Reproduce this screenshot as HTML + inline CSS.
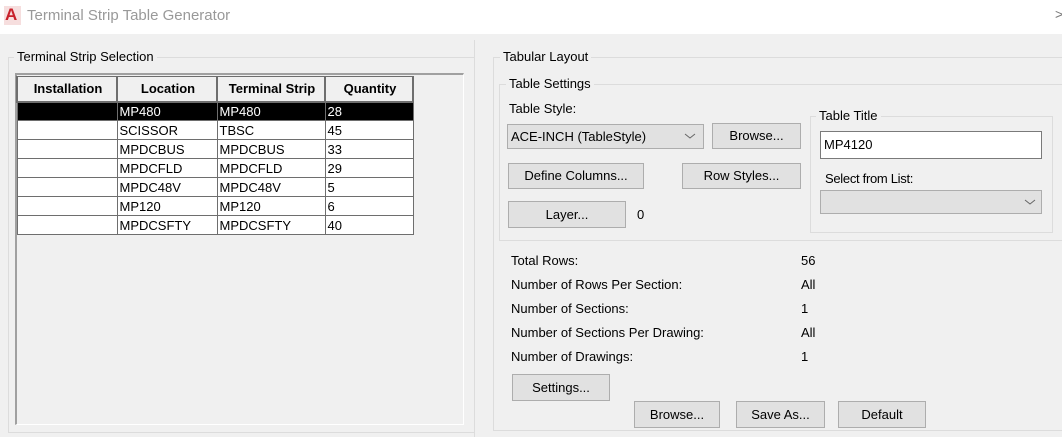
<!DOCTYPE html>
<html><head><style>
*{margin:0;padding:0;box-sizing:border-box}
body{width:1062px;height:437px;background:#f0f0f0;font-family:"Liberation Sans",Arial,sans-serif;font-size:13px;color:#000;position:relative;overflow:hidden}
.a{position:absolute}
.g{position:absolute;border:1px solid #dcdcdc}
.lg{position:absolute;background:#f0f0f0;padding:0 3px;font-size:13px;line-height:14px}
.btn{position:absolute;background:#e1e1e1;border:1px solid #adadad;text-align:center;font-size:13px}
.t{position:absolute;font-size:13px;letter-spacing:0}
table{border-collapse:collapse;position:absolute;left:16px;top:76px}
td,th{border:1px solid #6e6e6e;height:19px;font-size:13px;padding:0 0 0 2px;text-align:left;font-weight:normal;line-height:17px}
th{height:25px;background:#f0f0f0;text-align:center;font-weight:bold;border:2px solid #6e6e6e;border-top:1px solid #6e6e6e}
td{background:#fff}
tr.s td{background:#000;color:#fff}
</style></head><body>
<div class="a" style="left:0;top:0;width:1062px;height:34px;background:#fff"></div>
<div class="a" style="left:4px;top:6px;width:17px;height:19px;background:#f6dede"></div>
<div class="a" style="left:5px;top:5px;font-size:17px;font-weight:bold;color:#c8202a">A</div>
<div class="a" style="left:27px;top:7px;font-size:15px;color:#999">Terminal Strip Table Generator</div>
<div class="a" style="left:1055px;top:6px;font-size:14px;color:#777">&gt;</div>

<div class="g" style="left:8px;top:57px;width:467px;height:376px"></div>
<div class="lg" style="left:14px;top:50px">Terminal Strip Selection</div>
<div class="a" style="left:15px;top:73px;width:449px;height:352px;border-top:2px solid #a0a0a0;border-left:2px solid #a0a0a0;border-right:1px solid #fff;border-bottom:1px solid #fff"></div>
<table>
<tr><th style="width:100px">Installation</th><th style="width:100px">Location</th><th style="width:108px">Terminal Strip</th><th style="width:88px">Quantity</th></tr>
<tr class="s"><td></td><td>MP480</td><td>MP480</td><td>28</td></tr>
<tr><td></td><td>SCISSOR</td><td>TBSC</td><td>45</td></tr>
<tr><td></td><td>MPDCBUS</td><td>MPDCBUS</td><td>33</td></tr>
<tr><td></td><td>MPDCFLD</td><td>MPDCFLD</td><td>29</td></tr>
<tr><td></td><td>MPDC48V</td><td>MPDC48V</td><td>5</td></tr>
<tr><td></td><td>MP120</td><td>MP120</td><td>6</td></tr>
<tr><td></td><td>MPDCSFTY</td><td>MPDCSFTY</td><td>40</td></tr>
</table>
<div class="a" style="left:474px;top:40px;width:1px;height:397px;background:#dcdcdc"></div>

<div class="g" style="left:493px;top:57px;width:580px;height:374px"></div>
<div class="lg" style="left:500px;top:50px">Tabular Layout</div>
<div class="g" style="left:499px;top:84px;width:570px;height:157px"></div>
<div class="lg" style="left:506px;top:77px">Table Settings</div>
<div class="a" style="left:509px;top:101px">Table Style:</div>
<div class="a" style="left:507px;top:124px;width:197px;height:25px;background:#e1e1e1;border:1px solid #adadad;padding:4px 0 0 3px">ACE-INCH (TableStyle)</div>
<svg class="a" style="left:684px;top:132px" width="12" height="8"><path d="M1 2 L6 6 L11 2" fill="none" stroke="#666" stroke-width="1"/></svg>
<div class="btn" style="left:712px;top:123px;width:89px;height:26px;line-height:24px">Browse...</div>
<div class="btn" style="left:508px;top:163px;width:136px;height:26px;line-height:24px">Define Columns...</div>
<div class="btn" style="left:682px;top:163px;width:119px;height:26px;line-height:24px">Row Styles...</div>
<div class="btn" style="left:508px;top:201px;width:118px;height:27px;line-height:25px">Layer...</div>
<div class="a" style="left:637px;top:207px">0</div>

<div class="g" style="left:810px;top:116px;width:243px;height:117px"></div>
<div class="lg" style="left:816px;top:109px">Table Title</div>
<div class="a" style="left:820px;top:131px;width:222px;height:28px;background:#fff;border:1px solid #7a7a7a;padding:5px 0 0 3px">MP4120</div>
<div class="t" style="left:825px;top:171px;letter-spacing:-0.3px">Select from List:</div>
<div class="a" style="left:820px;top:190px;width:222px;height:24px;background:#e1e1e1;border:1px solid #adadad"></div>
<svg class="a" style="left:1024px;top:198px" width="12" height="8"><path d="M1 2 L6 6 L11 2" fill="none" stroke="#666" stroke-width="1"/></svg>

<div class="t" style="left:511px;top:253px">Total Rows:</div><div class="t" style="left:801px;top:253px">56</div>
<div class="t" style="left:511px;top:277px">Number of Rows Per Section:</div><div class="t" style="left:801px;top:277px">All</div>
<div class="t" style="left:511px;top:301px">Number of Sections:</div><div class="t" style="left:801px;top:301px">1</div>
<div class="t" style="left:511px;top:325px">Number of Sections Per Drawing:</div><div class="t" style="left:801px;top:325px">All</div>
<div class="t" style="left:511px;top:349px">Number of Drawings:</div><div class="t" style="left:801px;top:349px">1</div>

<div class="btn" style="left:512px;top:374px;width:98px;height:27px;line-height:25px">Settings...</div>
<div class="btn" style="left:634px;top:401px;width:86px;height:27px;line-height:25px">Browse...</div>
<div class="btn" style="left:736px;top:401px;width:89px;height:27px;line-height:25px">Save As...</div>
<div class="btn" style="left:838px;top:401px;width:88px;height:27px;line-height:25px">Default</div>
</body></html>
